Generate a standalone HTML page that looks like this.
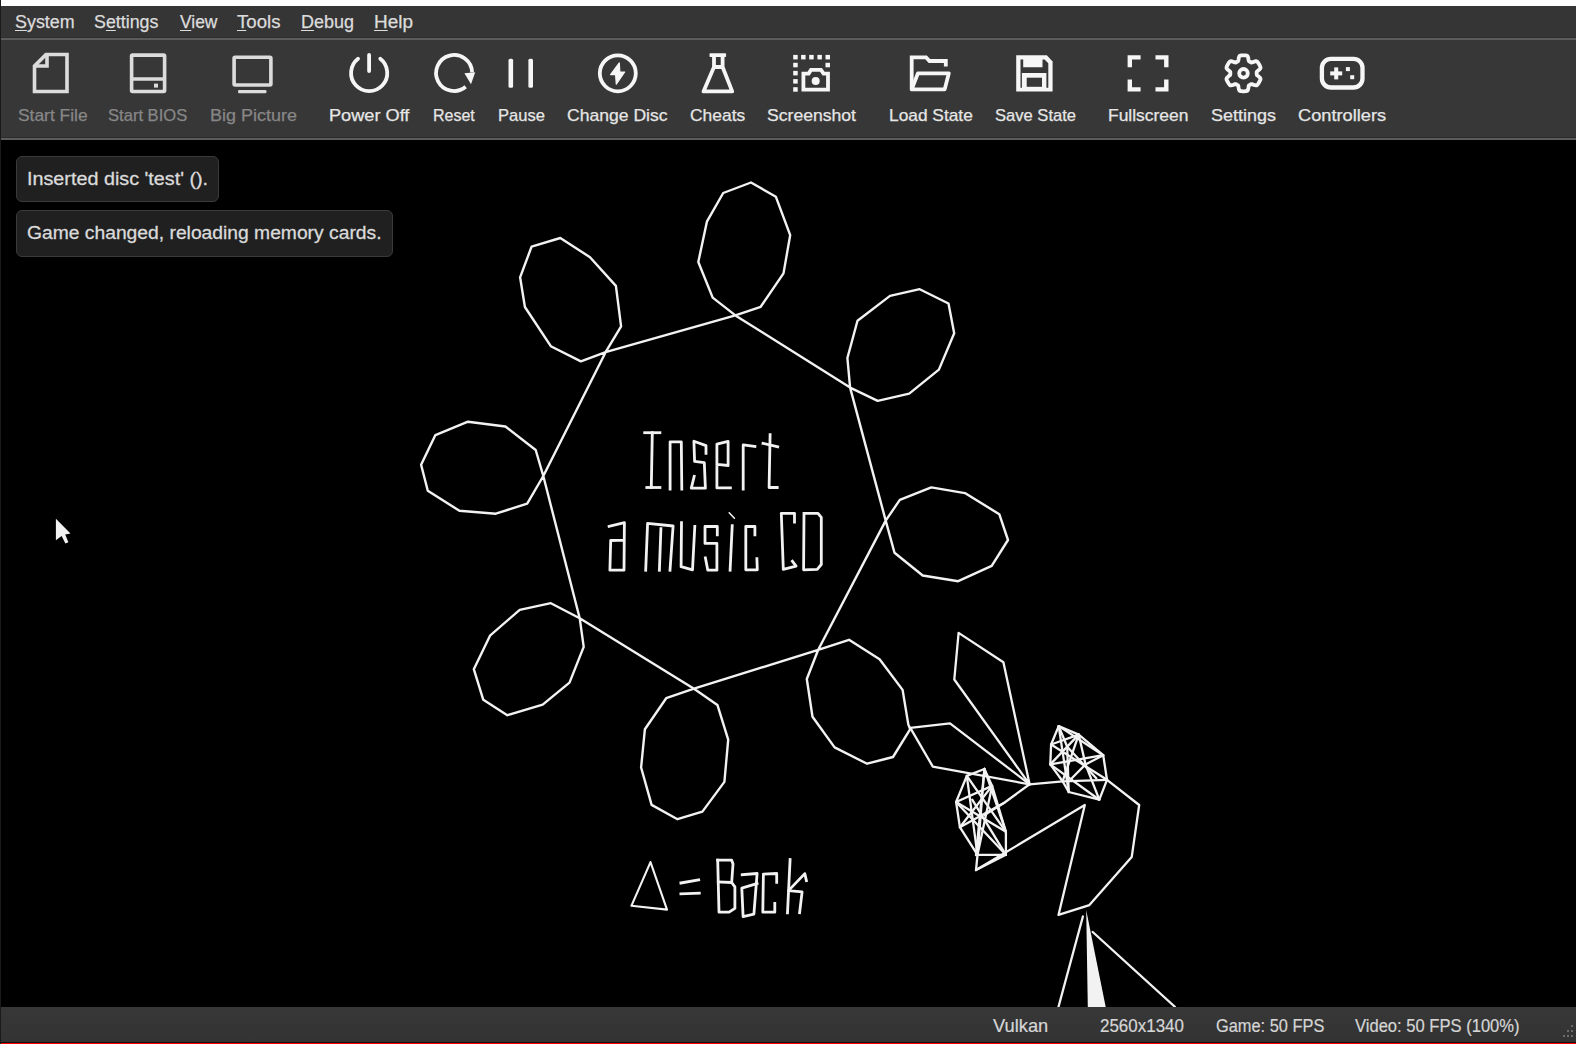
<!DOCTYPE html>
<html><head><meta charset="utf-8">
<style>
html,body{margin:0;padding:0;width:1576px;height:1044px;overflow:hidden;background:#000;font-family:"Liberation Sans",sans-serif;}
#top{position:absolute;left:0;top:0;width:1576px;height:6px;background:#fdfdfd;}
#menubar{position:absolute;left:0;top:6px;width:1576px;height:31px;background:#353535;}
#dk1{position:absolute;left:0;top:37px;width:1576px;height:1px;background:#2e2e2e;}
#dk2{position:absolute;left:0;top:137px;width:1576px;height:1px;background:#2c2c2c;}
#sep1{position:absolute;left:0;top:38px;width:1576px;height:2px;background:#5c5c5c;}
#toolbar{position:absolute;left:0;top:40px;width:1576px;height:97px;background:#373737;}
#sep2{position:absolute;left:0;top:138px;width:1576px;height:2px;background:#5c5c5c;}
#game{position:absolute;left:0;top:140px;width:1576px;height:867px;background:#000;}
#status{position:absolute;left:0;top:1007px;width:1576px;height:35px;background:linear-gradient(#373737,#333333);}
#botline{position:absolute;left:0;top:1042px;width:1576px;height:1px;background:#111;}
#red{position:absolute;left:0;top:1043px;width:1576px;height:1px;background:#f00;}
#leftedge{position:absolute;left:0;top:0;width:1px;height:1044px;background:#1a1a1a;}
.m{position:absolute;font-size:17.5px;color:#dcdcdc;-webkit-text-stroke:0.25px #dcdcdc;white-space:nowrap;line-height:20px;transform-origin:0 0;}
.m u{text-decoration:underline;text-decoration-thickness:1px;text-underline-offset:1.5px;}
.lbl{position:absolute;font-size:17px;color:#e6e6e6;-webkit-text-stroke:0.25px currentColor;white-space:nowrap;line-height:20px;transform-origin:0 0;}
.dis{color:#878787;}
.ic{position:absolute;top:49px;width:48px;height:48px;margin-left:-24px;}
.ic svg{width:48px;height:48px;display:block;overflow:visible;}
.note{position:absolute;left:16px;background:#202020;border:1.5px solid #3a3a3a;border-radius:6px;box-sizing:border-box;}
.st{position:absolute;font-size:17.5px;color:#d6d6d6;-webkit-text-stroke:0.2px currentColor;white-space:nowrap;line-height:20px;transform-origin:0 0;}
.nt{position:absolute;font-size:18.3px;color:#dadada;-webkit-text-stroke:0.3px currentColor;white-space:nowrap;line-height:20px;transform-origin:0 0;}
</style></head><body>
<div id="top"></div>
<div id="menubar"></div>
<div id="dk1"></div>
<div id="sep1"></div>
<div id="dk2"></div>
<div id="toolbar"></div>
<div id="sep2"></div>
<div id="game"></div>
<div id="status"></div>
<div id="botline"></div>
<div id="red"></div>
<div id="leftedge"></div>



<!--TEXT-->
<div class="m" style="left:15.0px;top:11.5px;transform:scaleX(1.022)"><u>S</u>ystem</div>
<div class="m" style="left:94.3px;top:11.5px;transform:scaleX(1.018)">S<u>e</u>ttings</div>
<div class="m" style="left:180.0px;top:11.5px;transform:scaleX(0.995)"><u>V</u>iew</div>
<div class="m" style="left:237.1px;top:11.5px;transform:scaleX(1.063)"><u>T</u>ools</div>
<div class="m" style="left:300.9px;top:11.5px;transform:scaleX(1.026)"><u>D</u>ebug</div>
<div class="m" style="left:374.4px;top:11.5px;transform:scaleX(1.082)"><u>H</u>elp</div>
<div class="lbl dis" style="left:17.6px;top:105.8px;transform:scaleX(1.023)">Start File</div>
<div class="lbl dis" style="left:108.0px;top:105.8px;transform:scaleX(0.975)">Start BIOS</div>
<div class="lbl dis" style="left:209.7px;top:105.8px;transform:scaleX(1.058)">Big Picture</div>
<div class="lbl" style="left:329.4px;top:105.8px;transform:scaleX(1.068)">Power Off</div>
<div class="lbl" style="left:432.9px;top:105.8px;transform:scaleX(0.941)">Reset</div>
<div class="lbl" style="left:497.9px;top:105.8px;transform:scaleX(0.972)">Pause</div>
<div class="lbl" style="left:567.4px;top:105.8px;transform:scaleX(1.033)">Change Disc</div>
<div class="lbl" style="left:690.4px;top:105.8px;transform:scaleX(1.025)">Cheats</div>
<div class="lbl" style="left:767.1px;top:105.8px;transform:scaleX(1.035)">Screenshot</div>
<div class="lbl" style="left:888.9px;top:105.8px;transform:scaleX(1.019)">Load State</div>
<div class="lbl" style="left:994.8px;top:105.8px;transform:scaleX(0.974)">Save State</div>
<div class="lbl" style="left:1108.4px;top:105.8px;transform:scaleX(1.026)">Fullscreen</div>
<div class="lbl" style="left:1210.9px;top:105.8px;transform:scaleX(1.058)">Settings</div>
<div class="lbl" style="left:1297.9px;top:105.8px;transform:scaleX(1.073)">Controllers</div>
<div class="st" style="left:993.3px;top:1015.7px;transform:scaleX(1.046)">Vulkan</div>
<div class="st" style="left:1099.7px;top:1015.7px;transform:scaleX(0.969)">2560x1340</div>
<div class="st" style="left:1215.9px;top:1015.7px;transform:scaleX(0.936)">Game: 50 FPS</div>
<div class="st" style="left:1354.5px;top:1015.7px;transform:scaleX(0.947)">Video: 50 FPS (100%)</div>
<!--/TEXT-->
<svg id="icons" width="1576" height="140" style="position:absolute;left:0;top:0">
<g fill="none" stroke="#dcdcdc" stroke-width="3.6" stroke-linejoin="miter">
<path d="M46 54.5 H67 V91.5 H34.5 V66 Z"/>
<path d="M34.5 66 H47 V54.5"/>
<rect x="131.6" y="55.1" width="33" height="36.4" rx="1"/>
<path d="M131.6 79 H164.6"/>
<rect x="234.1" y="57.2" width="36.8" height="27.8" rx="1"/>
</g>
<g fill="#dcdcdc">
<rect x="154" y="83.6" width="4" height="4"/>
<rect x="238" y="89.9" width="28.5" height="3.4" rx="1.2"/>
</g>
<g fill="none" stroke="#f6f6f6" stroke-width="3.8" stroke-linecap="round" stroke-linejoin="round">
<path d="M358.01 58.74 A18.1 18.1 0 1 0 380.29 58.74"/>
<path d="M369.1 55 V71"/>
<path d="M472.09 72.37 A18.0 18.0 0 1 0 465.67 86.79" stroke-linecap="butt"/>
<circle cx="617.8" cy="73.3" r="18"/>
<path d="M714 57 V67 L703.5 91.4 H732.2 L722.6 67 V57 M714 67 H722.6"/>
<path d="M808.6 73.6 L811 69.9 H821 L823.6 73.6 H828 V89.6 H803.4 V73.6 Z" stroke-linejoin="miter"/>
<path d="M911.7 89.4 V57.3 H926 L929.5 61 H945.8 V66.5" stroke-linejoin="miter" stroke-linecap="butt"/>
<path d="M911.7 89.4 H944.7 L948.8 73.4 H917.9 Z" stroke-linejoin="round"/>
<path d="M1140.6 57.4 H1129.8 V67.2 M1155.5 57.4 H1166.3 V67.2 M1129.8 79.6 V89.4 H1140.6 M1166.3 79.6 V89.4 H1155.5" stroke-width="4.4" stroke-linecap="butt" stroke-linejoin="miter"/>
<path d="M1256.70 73.30 L1256.69 73.76 L1256.67 74.22 L1256.70 74.69 L1257.13 75.22 L1257.88 75.84 L1258.76 76.54 L1259.61 77.32 L1260.26 78.11 L1260.55 78.84 L1260.41 79.46 L1260.19 80.04 L1259.94 80.62 L1259.68 81.19 L1259.39 81.75 L1259.09 82.30 L1258.76 82.84 L1258.42 83.37 L1258.06 83.88 L1257.68 84.38 L1257.29 84.87 L1256.82 85.30 L1256.04 85.41 L1255.03 85.24 L1253.94 84.89 L1252.88 84.48 L1251.98 84.15 L1251.30 84.04 L1250.88 84.24 L1250.49 84.49 L1250.10 84.73 L1249.70 84.95 L1249.29 85.16 L1248.90 85.42 L1248.66 86.06 L1248.49 87.02 L1248.32 88.14 L1248.08 89.26 L1247.72 90.22 L1247.23 90.84 L1246.63 91.03 L1246.01 91.12 L1245.38 91.20 L1244.76 91.26 L1244.13 91.29 L1243.50 91.30 L1242.87 91.29 L1242.24 91.26 L1241.62 91.20 L1240.99 91.12 L1240.37 91.03 L1239.77 90.84 L1239.28 90.22 L1238.92 89.26 L1238.68 88.14 L1238.51 87.02 L1238.34 86.06 L1238.10 85.42 L1237.71 85.16 L1237.30 84.95 L1236.90 84.73 L1236.51 84.49 L1236.12 84.24 L1235.70 84.04 L1235.02 84.15 L1234.12 84.48 L1233.06 84.89 L1231.97 85.24 L1230.96 85.41 L1230.18 85.30 L1229.71 84.87 L1229.32 84.38 L1228.94 83.88 L1228.58 83.37 L1228.24 82.84 L1227.91 82.30 L1227.61 81.75 L1227.32 81.19 L1227.06 80.62 L1226.81 80.04 L1226.59 79.46 L1226.45 78.84 L1226.74 78.11 L1227.39 77.32 L1228.24 76.54 L1229.12 75.84 L1229.87 75.22 L1230.30 74.69 L1230.33 74.22 L1230.31 73.76 L1230.30 73.30 L1230.31 72.84 L1230.33 72.38 L1230.30 71.91 L1229.87 71.38 L1229.12 70.76 L1228.24 70.06 L1227.39 69.28 L1226.74 68.49 L1226.45 67.76 L1226.59 67.14 L1226.81 66.56 L1227.06 65.98 L1227.32 65.41 L1227.61 64.85 L1227.91 64.30 L1228.24 63.76 L1228.58 63.23 L1228.94 62.72 L1229.32 62.22 L1229.71 61.73 L1230.18 61.30 L1230.96 61.19 L1231.97 61.36 L1233.06 61.71 L1234.12 62.12 L1235.02 62.45 L1235.70 62.56 L1236.12 62.36 L1236.51 62.11 L1236.90 61.87 L1237.30 61.65 L1237.71 61.44 L1238.10 61.18 L1238.34 60.54 L1238.51 59.58 L1238.68 58.46 L1238.92 57.34 L1239.28 56.38 L1239.77 55.76 L1240.37 55.57 L1240.99 55.48 L1241.62 55.40 L1242.24 55.34 L1242.87 55.31 L1243.50 55.30 L1244.13 55.31 L1244.76 55.34 L1245.38 55.40 L1246.01 55.48 L1246.63 55.57 L1247.23 55.76 L1247.72 56.38 L1248.08 57.34 L1248.32 58.46 L1248.49 59.58 L1248.66 60.54 L1248.90 61.18 L1249.29 61.44 L1249.70 61.65 L1250.10 61.87 L1250.49 62.11 L1250.88 62.36 L1251.30 62.56 L1251.98 62.45 L1252.88 62.12 L1253.94 61.71 L1255.03 61.36 L1256.04 61.19 L1256.82 61.30 L1257.29 61.73 L1257.68 62.22 L1258.06 62.72 L1258.42 63.23 L1258.76 63.76 L1259.09 64.30 L1259.39 64.85 L1259.68 65.41 L1259.94 65.98 L1260.19 66.56 L1260.41 67.14 L1260.55 67.76 L1260.26 68.49 L1259.61 69.28 L1258.76 70.06 L1257.88 70.76 L1257.13 71.38 L1256.70 71.91 L1256.67 72.38 L1256.69 72.84 Z"/>
<circle cx="1243.5" cy="73.3" r="4.3" stroke-width="3.8"/>
<rect x="1321.9" y="58.8" width="40.6" height="28.7" rx="9" stroke-width="4.3"/>
</g>
<g fill="#f6f6f6">
<polygon points="464.4,73.3 475.2,72.3 471,84.2"/>
<rect x="508.5" y="58.8" width="4.6" height="29" rx="1.5"/>
<rect x="528.4" y="58.8" width="4.6" height="29" rx="1.5"/>
<polygon points="619.3,62.8 610.6,74.6 615.6,74.6 616.3,84.2 624.7,72 619.8,72" stroke="#f6f6f6" stroke-width="1.2" stroke-linejoin="round"/>
<rect x="709.5" y="53.3" width="16.6" height="3.8" rx="0.8"/>
<circle cx="815.7" cy="81" r="4"/>
<rect x="793.2" y="54.9" width="4.5" height="4.5"/><rect x="801.1" y="54.9" width="4.5" height="4.5"/><rect x="809.2" y="54.9" width="4.5" height="4.5"/><rect x="817.4" y="54.9" width="4.5" height="4.5"/><rect x="825.5" y="54.9" width="4.5" height="4.5"/>
<rect x="793.2" y="62.8" width="4.5" height="4.5"/><rect x="825.5" y="62.8" width="4.5" height="4.5"/>
<rect x="793.2" y="70.9" width="4.5" height="4.5"/><rect x="793.2" y="79.1" width="4.5" height="4.5"/><rect x="793.2" y="87.2" width="4.5" height="4.5"/>
<path d="M1016.2 55.2 H1046.8 L1052.6 61.4 V91.6 H1016.2 Z"/>
<rect x="1330.2" y="71.4" width="12" height="4"/>
<rect x="1334.2" y="67.4" width="4" height="12"/>
<rect x="1345.9" y="67.1" width="4" height="4"/>
<rect x="1350.2" y="75.2" width="4" height="4"/>
</g>
<g fill="#373737">
<path d="M1020.5 59.5 H1023.2 V67.2 H1042.5 V59.5 H1044.5 L1048.3 63.3 V87.7 H1046.4 V73 H1021.9 V87.7 H1020.5 Z"/>
<rect x="1026.7" y="77.7" width="15.3" height="9.1"/>
</g>
</svg>

<!--GAME--><svg id="gamesvg" width="1576" height="1007" style="position:absolute;left:0;top:0">
<g fill="none" stroke="#f2f2f2" stroke-width="2.4" stroke-linejoin="round" stroke-linecap="round">
<polygon points="605.6,352.2 580.9,361.4 550.8,346.2 524.9,307.0 520.1,277.3 531.6,246.6 560.3,238.0 590.0,257.2 615.9,285.9 621.1,326.3 605.6,352.2 543.3,476.0 527.2,503.6 495.8,513.7 459.4,510.8 427.8,490.7 421.1,464.8 435.4,435.1 468.0,421.7 505.4,426.5 535.7,450.0 543.3,476.0 579.7,618.2 583.7,646.9 569.5,682.6 542.7,704.6 507.3,715.2 483.3,699.8 473.8,669.2 490.0,635.7 519.7,609.8 550.9,603.2 579.7,618.2 694.0,688.7 717.4,704.9 728.2,739.7 724.4,781.9 702.4,811.6 677.5,819.2 651.6,804.9 641.1,767.5 644.9,729.2 666.2,698.2 694.0,688.7 818.2,649.8 849.0,639.8 879.6,659.3 902.6,689.9 908.3,724.4 910.2,729.2 893.0,757.0 867.1,763.7 834.6,747.4 812.5,716.7 806.8,679.0 818.2,649.8 885.7,520.6 899.8,499.9 931.3,487.4 964.9,493.1 999.3,514.2 1008.0,540.0 991.7,565.9 958.2,581.2 922.7,575.5 894.5,552.8 885.7,520.6 850.1,387.6 847.4,358.0 857.5,320.8 890.0,295.9 919.7,289.2 948.5,303.5 954.2,333.2 938.9,369.6 909.2,393.6 877.7,400.8 850.1,387.6 735.4,315.4 712.7,297.6 698.3,262.0 706.9,221.7 723.2,193.0 751.0,182.5 775.9,196.8 790.2,235.1 783.5,273.4 760.7,306.8 735.4,315.4"/>
</g><g fill="none" stroke="#f2f2f2" stroke-width="2.8" stroke-linejoin="round" stroke-linecap="square">
<polyline points="644.7,432.7 659.9,432.7"/>
<polyline points="652.3,432.7 651.3,487.5"/>
<polyline points="646.8,487.5 659.9,487.5"/>
<polyline points="670.1,489.0 670.1,441.8 681.3,441.8 681.8,489.0"/>
<polyline points="706.0,453.4 706.0,445.6 693.9,441.3 694.6,461.4 704.3,462.6 705.4,488.2 691.3,488.2 694.2,476.4"/>
<polyline points="716.9,464.3 728.1,465.5 728.1,441.3 716.9,444.2 716.9,487.9 730.4,487.9"/>
<polyline points="743.2,489.0 743.2,444.9 754.9,446.4"/>
<polyline points="770.1,434.7 769.1,487.5 777.2,487.5"/>
<polyline points="763.0,443.4 777.7,446.9"/>
<polyline points="609.1,526.4 624.4,522.6 624.0,570.2 609.9,570.2 610.7,540.5 624.0,540.1"/>
<polyline points="645.7,570.2 647.6,523.3 673.1,526.0 670.0,570.2"/>
<polyline points="660.9,528.7 659.4,570.2"/>
<polyline points="681.5,522.6 681.1,566.7 692.5,569.8 694.8,526.4"/>
<polyline points="717.3,534.8 717.3,526.5 705.0,526.5 705.0,543.4 716.9,543.4 716.9,570.2 707.8,570.2 705.4,557.9"/>
<polyline points="732.2,525.7 730.1,570.2"/>
<polyline points="754.9,534.8 754.9,526.5 745.8,526.5 745.8,569.8 757.3,569.8 756.9,558.7"/>
<polyline points="794.5,522.0 794.5,513.3 781.3,513.3 783.3,569.4 796.1,566.1 792.4,561.2"/>
<polyline points="804.0,513.3 818.0,513.3 821.3,517.4 821.3,564.5 817.2,569.4 803.6,569.8 804.0,513.3"/>
<polyline points="680.9,883.0 698.7,879.8"/>
<polyline points="680.9,893.8 699.3,893.1"/>
<polyline points="717.7,860.2 731.7,860.2 733.0,864.0 731.7,882.5 718.3,882.0"/>
<polyline points="731.7,882.5 734.9,886.8 734.9,908.4 729.1,912.2 719.0,912.2 717.7,860.2"/>
<polyline points="742.2,874.7 757.1,873.5 753.9,914.1 743.1,916.6 741.8,888.1 757.1,883.6"/>
<polyline points="776.7,882.4 776.7,873.5 763.4,874.1 762.8,912.2 774.8,912.2 774.8,903.3"/>
<polyline points="790.1,859.5 787.5,912.8"/>
<polyline points="806.4,880.6 804.8,873.6 788.5,890.6 802.1,891.9 799.6,912.8"/>
</g><g fill="none" stroke="#f2f2f2" stroke-width="2.1" stroke-linejoin="round" stroke-linecap="round">
<polygon points="650.5,862.1 631.4,905.8 667,909.6"/>
<polyline points="729.2,512.8 734.4,518.2" stroke-width="1.6"/>
</g><g fill="none" stroke="#f2f2f2" stroke-width="2.3" stroke-linejoin="round" stroke-linecap="round">
<polyline points="910.3,727.8 950.0,723.4 1029.6,784.3"/>
<polyline points="910.3,727.8 932.8,766.6 1029.6,784.3"/>
<polyline points="958.6,632.9 1003.4,662.2 1029.6,784.3 954.3,679.5 958.6,632.9"/>
<polyline points="1029.6,784.3 1062.6,781.3"/>
<polyline points="1029.6,784.3 1004.3,802.7 984.4,815.0"/>
<polyline points="1058.7,726.1 1078.7,734.6 1103.2,755.2 1107.0,779.8 1099.3,799.7 1068.7,792.0 1062.6,781.3 1050.3,764.4 1051.1,744.5 1058.7,726.1"/>
<polyline points="1058.7,726.1 1067.2,746.8 1068.7,792.0"/>
<polyline points="1078.7,734.6 1085.5,764.4 1099.3,799.7"/>
<polyline points="1051.1,744.5 1078.7,734.6"/>
<polyline points="1050.3,764.4 1078.7,734.6"/>
<polyline points="1085.5,764.4 1103.2,755.2"/>
<polyline points="1062.6,781.3 1107.0,779.8"/>
<polyline points="1067.2,746.8 1096.3,778.2"/>
<polyline points="1050.3,764.4 1099.3,799.7"/>
<polyline points="1071.8,778.2 1085.5,764.4"/>
<polyline points="984.4,769.0 966.8,775.9 956.1,802.0 959.9,827.2 977.5,854.8 1005.9,854.8 1005.9,831.8 992.1,785.9 984.4,769.0"/>
<polyline points="966.8,775.9 977.5,854.8"/>
<polyline points="984.4,769.0 976.0,855.0"/>
<polyline points="956.1,802.0 992.1,785.9"/>
<polyline points="959.9,827.2 1004.3,802.7"/>
<polyline points="972.2,799.7 1005.9,854.8"/>
<polyline points="984.4,769.0 1005.9,831.8"/>
<polyline points="956.1,802.0 1005.9,831.8"/>
<polyline points="977.5,854.8 976.0,870.1 1005.9,854.8"/>
<polyline points="1058.7,726.1 1103.2,755.2"/>
<polyline points="1051.1,744.5 1107.0,779.8"/>
<polyline points="1050.3,764.4 1103.2,755.2"/>
<polyline points="1058.7,726.1 1068.7,792.0"/>
<polyline points="1078.7,734.6 1062.6,781.3"/>
<polyline points="966.8,775.9 1005.9,831.8"/>
<polyline points="956.1,802.0 1005.9,854.8"/>
<polyline points="959.9,827.2 992.1,785.9"/>
<polyline points="984.4,769.0 977.5,854.8"/>
<polyline points="992.1,785.9 977.5,854.8"/>
<polyline points="976.0,870.1 1084.8,805.0 1058.5,914.9 1089.4,905.1 1131.7,857.1 1139.2,805.0 1107.0,779.8"/>
<polyline points="1082.9,916.5 1058.5,1006.8"/>
<polyline points="1092.7,932.0 1174.9,1006.8"/>
</g>
<g fill="#f2f2f2"><polygon points="1086.2,910 1087.8,1007 1105.7,1007"/>
<polygon points="55.9,518.8 70.5,533.4 65.2,534.6 68.4,542.2 65.4,543.6 61.6,536 55.9,540.3"/></g>
</svg><!--/GAME-->

<div class="note" style="top:155.5px;width:203px;height:46.5px;"></div>
<div class="note" style="top:210px;width:377px;height:46.5px;"></div>
<div class="nt" style="left:26.6px;top:169.3px;transform:scaleX(1.081)">Inserted disc 'test' ().</div>
<div class="nt" style="left:27.1px;top:223.3px;transform:scaleX(1.054)">Game changed, reloading memory cards.</div>

<!--GRIP--><svg style="position:absolute;left:1550px;top:1022px" width="26" height="20"><g fill="#6a6a6a"><rect x="21" y="3" width="2" height="2"/><rect x="17" y="8" width="2" height="2"/><rect x="21" y="8" width="2" height="2"/><rect x="13" y="13" width="2" height="2"/><rect x="17" y="13" width="2" height="2"/><rect x="21" y="13" width="2" height="2"/></g></svg>
</body></html>
